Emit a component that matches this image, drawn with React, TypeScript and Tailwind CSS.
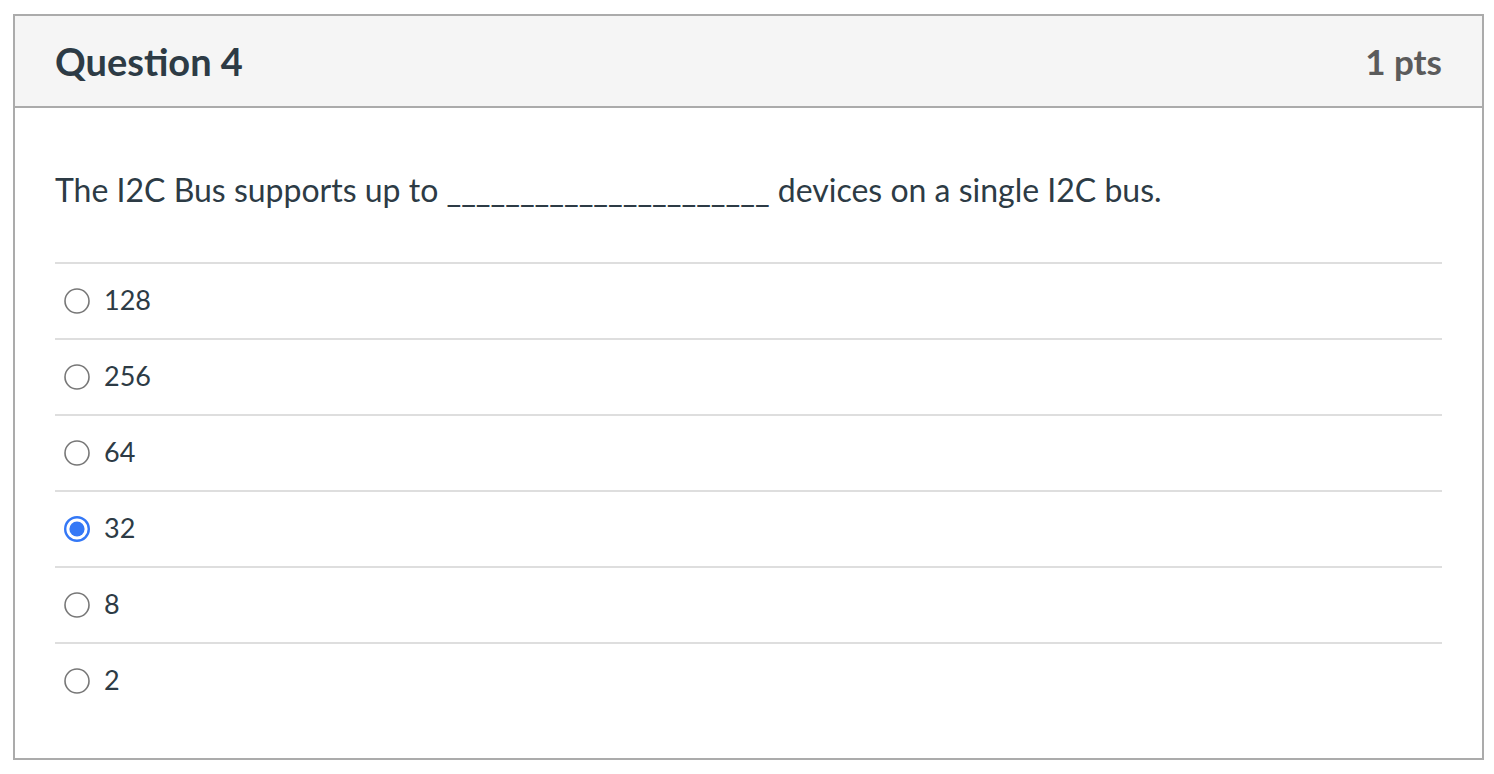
import React from "react";

const answers = [
  { label: "128", selected: false },
  { label: "256", selected: false },
  { label: "64", selected: false },
  { label: "32", selected: true },
  { label: "8", selected: false },
  { label: "2", selected: false },
];

function Radio({ selected }: { selected: boolean }) {
  if (selected) {
    return (
      <svg width="26" height="26" viewBox="0 0 26 26" className="shrink-0">
        <circle cx="13" cy="13" r="11.8" fill="white" stroke="#3478f6" strokeWidth="2.4" />
        <circle cx="13" cy="13" r="7.6" fill="#3478f6" />
      </svg>
    );
  }
  return (
    <svg width="26" height="26" viewBox="0 0 26 26" className="shrink-0">
      <circle cx="13" cy="13" r="12" fill="white" stroke="#777777" strokeWidth="1.6" />
    </svg>
  );
}

export default function App() {
  return (
    <div className="min-h-[774px] bg-white pt-[14px] pl-[13px] pr-[10px]" style={{ fontFamily: "Lato, 'Noto Sans', sans-serif" }}>
      <div className="w-[1471px] border-2 border-[#ababab] bg-white">
        <div className="flex h-[92px] items-center justify-between border-b-2 border-[#ababab] bg-[#f5f5f5] px-10">
          <h2 className="text-[38px] font-bold leading-none text-[#2d3b45]">Question 4</h2>
          <div className="text-[35px] font-bold leading-none text-[#5b5b5b]">1 pts</div>
        </div>
        <div className="px-10 pt-[59px] pb-[40px]">
          <p className="text-[32px] leading-[45px] text-[#2d3b45]">
            The I2C Bus supports up to ______________________ devices on a single I2C bus.
          </p>
          <div className="mt-[50px]">
            {answers.map((a) => (
              <div key={a.label} className="flex h-[76px] items-center border-t-2 border-[#dedede]">
                <div className="ml-[9px] mr-[14px] flex items-center">
                  <Radio selected={a.selected} />
                </div>
                <span className="pb-[4px] text-[27px] leading-none text-[#2d3b45]">{a.label}</span>
              </div>
            ))}
          </div>
        </div>
      </div>
    </div>
  );
}
